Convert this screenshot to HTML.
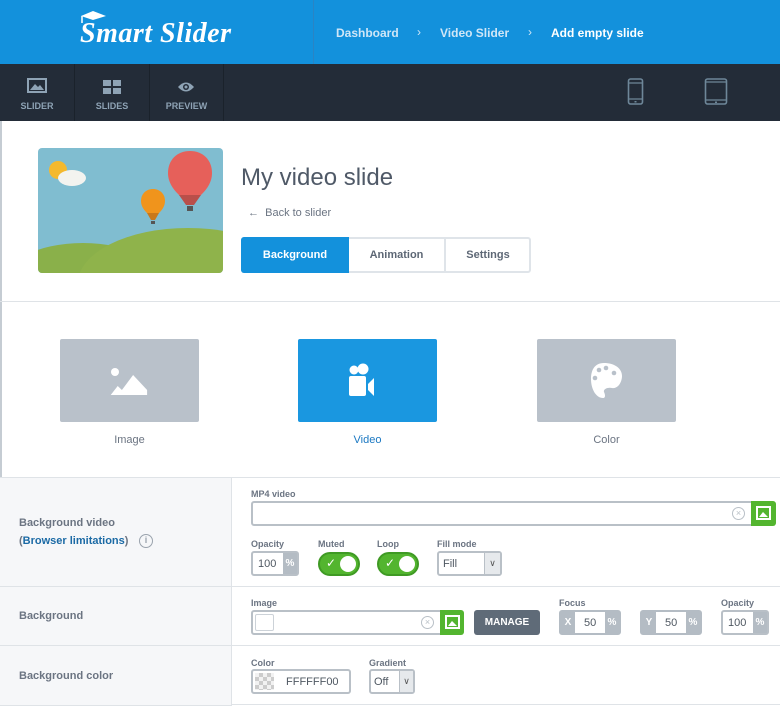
<!DOCTYPE html>
<html><head><meta charset="utf-8"><style>
*{box-sizing:border-box;margin:0;padding:0}
body{width:780px;height:706px;overflow:hidden;background:#fff;font-family:"Liberation Sans",sans-serif;position:relative;color:#5d6775}
.a{position:absolute}
.lbl{position:absolute;font-size:9px;font-weight:bold;color:#6b7482}
.inp{position:absolute;border:2px solid #b9c0c7;border-radius:3px;background:#fff;height:25px}
.unit{position:absolute;top:0;bottom:0;background:#b4bcc4;color:#fff;font-size:10px;font-weight:bold;display:flex;align-items:center;justify-content:center}
.val{position:absolute;font-size:11px;color:#4f5862}
.tog{position:absolute;width:42px;height:24px;border-radius:12px;background:#53b52f;border:2px solid #3f9a24}
.tog:after{content:"";position:absolute;right:2px;top:2px;width:16px;height:16px;border-radius:50%;background:#fff}
.tog span{position:absolute;left:6px;top:2px;color:#fff;font-size:12px}
.row{position:absolute;left:0;width:232px;background:#f6f7f9;border-right:1px solid #dfe3e7;border-bottom:1px solid #dfe3e7}
.rl{position:absolute;left:19px;font-size:11px;font-weight:bold;color:#6b7482}
</style></head><body>
<div class="a" style="left:0;top:0;width:780px;height:64px;background:#1391dc"></div>
<div class="a" style="left:313px;top:0;width:1px;height:64px;background:#2a84c4"></div>
<div class="a" style="left:80px;top:18px;font-family:'Liberation Serif',serif;font-style:italic;font-weight:bold;font-size:28px;color:#fff;letter-spacing:0.5px">Smart Slider</div>
<svg class="a" style="left:79px;top:10px" width="30" height="14"><path d="M2 6 L14 1 L27 6 L14 10 Z" fill="#fff"/><path d="M3 6 V13" stroke="#fff" stroke-width="1.5"/></svg>
<div class="a" style="left:336px;top:26px;font-size:12px;color:#cfe6f7;font-weight:bold">Dashboard</div>
<div class="a" style="left:417px;top:25px;font-size:12px;color:#cfe6f7">›</div>
<div class="a" style="left:440px;top:26px;font-size:12px;color:#cfe6f7;font-weight:bold">Video Slider</div>
<div class="a" style="left:528px;top:25px;font-size:12px;color:#cfe6f7">›</div>
<div class="a" style="left:551px;top:26px;font-size:12px;color:#fff;font-weight:bold">Add empty slide</div>

<div class="a" style="left:0;top:64px;width:780px;height:57px;background:#232c38"></div>
<div class="a" style="left:74px;top:64px;width:1px;height:57px;background:#1a222b"></div>
<div class="a" style="left:149px;top:64px;width:1px;height:57px;background:#1a222b"></div>
<div class="a" style="left:223px;top:64px;width:1px;height:57px;background:#1a222b"></div>
<svg class="a" style="left:27px;top:78px" width="20" height="16"><rect x="1" y="1" width="18" height="13" fill="none" stroke="#8ea3b5" stroke-width="2"/><path d="M3 12 L8 6 L11 9 L13 7 L17 12Z" fill="#8ea3b5"/></svg>
<svg class="a" style="left:103px;top:80px" width="18" height="14"><rect x="0" y="0" width="8" height="6" fill="#8ea3b5"/><rect x="10" y="0" width="8" height="6" fill="#8ea3b5"/><rect x="0" y="8" width="8" height="6" fill="#8ea3b5"/><rect x="10" y="8" width="8" height="6" fill="#8ea3b5"/></svg>
<svg class="a" style="left:177px;top:81px" width="18" height="12"><path d="M1 6 Q9 -3 17 6 Q9 15 1 6Z" fill="#8ea3b5"/><circle cx="9" cy="6" r="3" fill="#232c38"/><circle cx="9" cy="6" r="1.5" fill="#8ea3b5"/></svg>
<div class="a" style="left:0;width:74px;top:101px;text-align:center;font-size:9px;font-weight:bold;color:#8ea3b5">SLIDER</div>
<div class="a" style="left:75px;width:74px;top:101px;text-align:center;font-size:9px;font-weight:bold;color:#8ea3b5">SLIDES</div>
<div class="a" style="left:150px;width:73px;top:101px;text-align:center;font-size:9px;font-weight:bold;color:#8ea3b5">PREVIEW</div>
<svg class="a" style="left:627px;top:78px" width="18" height="28"><rect x="1.5" y="1" width="14" height="25" rx="2" fill="none" stroke="#6e8799" stroke-width="1.6"/><path d="M2 5H15M2 21H15" stroke="#6e8799" stroke-width="1.2"/><rect x="7.5" y="23" width="2" height="1.5" fill="#6e8799"/></svg>
<svg class="a" style="left:704px;top:78px" width="24" height="28"><rect x="1.5" y="1" width="21" height="25" rx="2" fill="none" stroke="#6e8799" stroke-width="1.6"/><path d="M2 4H22M2 22H22" stroke="#6e8799" stroke-width="1.2"/><rect x="11" y="23.5" width="2" height="1.5" fill="#6e8799"/></svg>

<div class="a" style="left:0;top:121px;width:2px;height:585px;background:#c5ccd3"></div>

<svg class="a" style="left:38px;top:148px" width="185" height="125"><defs><clipPath id="c"><rect width="185" height="125" rx="4"/></clipPath></defs><g clip-path="url(#c)"><rect width="185" height="125" fill="#80bdd0"/><ellipse cx="45" cy="140" rx="85" ry="45" fill="#8ab04a"/><ellipse cx="150" cy="135" rx="110" ry="55" fill="#8fb34b"/><circle cx="20" cy="22" r="9" fill="#f4b92e"/><ellipse cx="34" cy="30" rx="14" ry="8" fill="#f3f3ef"/><path d="M152 3 C139 3 130 12 130 25 C130 35 136 42 141 47 H163 C168 42 174 35 174 25 C174 12 165 3 152 3Z" fill="#e6605a"/><path d="M141 47 H163 L156 57 H148Z" fill="#b94f4a"/><rect x="149" y="58" width="6" height="5" fill="#555"/><path d="M115 41 C108 41 103 46 103 53 C103 59 107 63 109 65 H121 C123 63 127 59 127 53 C127 46 122 41 115 41Z" fill="#f0941c"/><path d="M109 65 H121 L117 72 H113Z" fill="#c9781a"/><rect x="113" y="73" width="4" height="3" fill="#555"/></g></svg>
<div class="a" style="left:241px;top:164px;font-size:24px;color:#4f5967">My video slide</div>
<div class="a" style="left:248px;top:207px;font-size:11px;color:#6b7482">&#8592;&nbsp; Back to slider</div>
<div class="a" style="left:241px;top:237px;width:290px;height:36px;border:2px solid #dfe4e9;border-radius:3px"></div>
<div class="a" style="left:241px;top:237px;width:108px;height:36px;background:#1391dc;border-radius:3px 0 0 3px;color:#fff;font-size:11px;font-weight:bold;text-align:center;line-height:36px">Background</div>
<div class="a" style="left:444px;top:237px;width:2px;height:36px;background:#dfe4e9"></div>
<div class="a" style="left:349px;top:237px;width:95px;line-height:36px;text-align:center;font-size:11px;font-weight:bold;color:#5d6775">Animation</div>
<div class="a" style="left:446px;top:237px;width:84px;line-height:36px;text-align:center;font-size:11px;font-weight:bold;color:#5d6775">Settings</div>

<div class="a" style="left:0;top:301px;width:780px;height:1px;background:#dfe3e7"></div>
<div class="a" style="left:60px;top:339px;width:139px;height:83px;background:#b9c1ca;border-radius:2px"></div>
<svg class="a" style="left:110px;top:366px" width="40" height="30"><circle cx="5" cy="6" r="4" fill="#fff"/><path d="M1 29 L6 20 L9 24 L17 9 L27 24 V29Z" fill="#fff" transform="scale(1.4 1) translate(-0.5 0)"/></svg>
<div class="a" style="left:298px;top:339px;width:139px;height:83px;background:#1a97e0;border-radius:2px"></div>
<svg class="a" style="left:348px;top:362px" width="40" height="36"><circle cx="6" cy="8" r="4.5" fill="#fff"/><circle cx="15" cy="7" r="5.5" fill="#fff"/><rect x="1" y="14" width="17" height="20" rx="2" fill="#fff"/><path d="M20 22 L26 16 V34 L20 28Z" fill="#fff"/></svg>
<div class="a" style="left:537px;top:339px;width:139px;height:83px;background:#b9c1ca;border-radius:2px"></div>
<svg class="a" style="left:590px;top:362px" width="34" height="40"><path d="M14 1 C4 1 1 9 1 17 C1 27 6 36 13 36 C16 36 15 32 14 30 C13 27 18 25 22 26 C28 27 32 20 32 14 C32 6 24 1 14 1Z" fill="#fff"/><circle cx="9" cy="8" r="2.3" fill="#b9c1ca"/><circle cx="16" cy="6" r="2.3" fill="#b9c1ca"/><circle cx="24" cy="11" r="2.3" fill="#b9c1ca"/><circle cx="5" cy="16" r="2.3" fill="#b9c1ca"/></svg>
<div class="a" style="left:60px;width:139px;top:434px;text-align:center;font-size:11px;color:#6b7482">Image</div>
<div class="a" style="left:298px;width:139px;top:434px;text-align:center;font-size:11px;color:#1b78c2">Video</div>
<div class="a" style="left:537px;width:139px;top:434px;text-align:center;font-size:11px;color:#6b7482">Color</div>

<div class="a" style="left:0;top:477px;width:780px;height:1px;background:#dfe3e7"></div>
<div class="row" style="top:478px;height:109px"></div>
<div class="row" style="top:587px;height:59px"></div>
<div class="row" style="top:646px;height:60px"></div>
<div class="a" style="left:232px;top:586px;width:548px;height:1px;background:#dfe3e7"></div>
<div class="a" style="left:232px;top:645px;width:548px;height:1px;background:#dfe3e7"></div>
<div class="a" style="left:232px;top:704px;width:548px;height:1px;background:#dfe3e7"></div>
<div class="rl" style="top:517px">Background video</div>
<div class="rl" style="top:535px">(<span style="color:#1b6aa5">Browser limitations</span>)</div>
<div class="a" style="left:139px;top:534px;width:14px;height:14px;border:1.5px solid #9aa3ad;border-radius:50%;color:#9aa3ad;font-size:9px;text-align:center;line-height:11px;font-weight:bold">i</div>
<div class="rl" style="top:610px">Background</div>
<div class="rl" style="top:670px">Background color</div>

<div class="lbl" style="left:251px;top:489px">MP4 video</div>
<div class="inp" style="left:251px;top:501px;width:503px"><div class="a" style="right:7px;top:4px;width:13px;height:13px;border:1.5px solid #b9c0c7;border-radius:50%;color:#b9c0c7;font-size:9px;text-align:center;line-height:10px">×</div></div>
<div class="a" style="left:751px;top:501px;width:25px;height:25px;background:#53b52f;border-radius:0 3px 3px 0"></div>
<svg class="a" style="left:756px;top:506px" width="15" height="14"><rect x="1" y="1" width="13" height="12" fill="none" stroke="#fff" stroke-width="2"/><path d="M3 11 L7 6 L12 11Z" fill="#fff"/></svg>
<div class="lbl" style="left:251px;top:539px">Opacity</div>
<div class="inp" style="left:251px;top:551px;width:48px"><div class="val" style="left:5px;top:5px">100</div><div class="unit" style="right:0;width:14px">%</div></div>
<div class="lbl" style="left:318px;top:539px">Muted</div>
<div class="tog" style="left:318px;top:552px"><span>✓</span></div>
<div class="lbl" style="left:377px;top:539px">Loop</div>
<div class="tog" style="left:377px;top:552px"><span>✓</span></div>
<div class="lbl" style="left:437px;top:539px">Fill mode</div>
<div class="inp" style="left:437px;top:551px;width:65px"><div class="val" style="left:4px;top:5px">Fill</div><div class="a" style="right:0;top:0;bottom:0;width:16px;background:#e6e9ec;border-left:1px solid #b9c0c7;font-size:9px;text-align:center;line-height:21px;color:#555">∨</div></div>

<div class="lbl" style="left:251px;top:598px">Image</div>
<div class="inp" style="left:251px;top:610px;width:192px"><div class="a" style="left:2px;top:2px;width:19px;height:17px;border:1px solid #ccd2d8;border-radius:2px"></div><div class="a" style="right:7px;top:4px;width:13px;height:13px;border:1.5px solid #b9c0c7;border-radius:50%;color:#b9c0c7;font-size:9px;text-align:center;line-height:10px">×</div></div>
<div class="a" style="left:440px;top:610px;width:24px;height:25px;background:#53b52f;border-radius:0 3px 3px 0"></div>
<svg class="a" style="left:445px;top:615px" width="15" height="14"><rect x="1" y="1" width="13" height="12" fill="none" stroke="#fff" stroke-width="2"/><path d="M3 11 L7 6 L12 11Z" fill="#fff"/></svg>
<div class="a" style="left:474px;top:610px;width:66px;height:25px;background:#5f6b78;border-radius:3px;color:#fff;font-size:10px;font-weight:bold;text-align:center;line-height:25px">MANAGE</div>
<div class="lbl" style="left:559px;top:598px">Focus</div>
<div class="inp" style="left:559px;top:610px;width:62px;border-color:#b4bcc4"><div class="unit" style="left:0;width:14px">X</div><div class="val" style="left:23px;top:5px">50</div><div class="unit" style="right:0;width:14px">%</div></div>
<div class="inp" style="left:640px;top:610px;width:62px;border-color:#b4bcc4"><div class="unit" style="left:0;width:14px">Y</div><div class="val" style="left:23px;top:5px">50</div><div class="unit" style="right:0;width:14px">%</div></div>
<div class="lbl" style="left:721px;top:598px">Opacity</div>
<div class="inp" style="left:721px;top:610px;width:48px"><div class="val" style="left:5px;top:5px">100</div><div class="unit" style="right:0;width:14px">%</div></div>

<div class="lbl" style="left:251px;top:658px">Color</div>
<div class="inp" style="left:251px;top:669px;width:100px"><div class="a" style="left:2px;top:2px;width:19px;height:17px;background:repeating-conic-gradient(#ccc 0 25%,#f2f2f2 0 50%) 0 0/8px 8px"></div><div class="val" style="left:33px;top:5px">FFFFFF00</div></div>
<div class="lbl" style="left:369px;top:658px">Gradient</div>
<div class="inp" style="left:369px;top:669px;width:46px"><div class="val" style="left:3px;top:5px">Off</div><div class="a" style="right:0;top:0;bottom:0;width:14px;background:#e6e9ec;border-left:1px solid #b9c0c7;font-size:9px;text-align:center;line-height:21px;color:#555">∨</div></div>
</body></html>
